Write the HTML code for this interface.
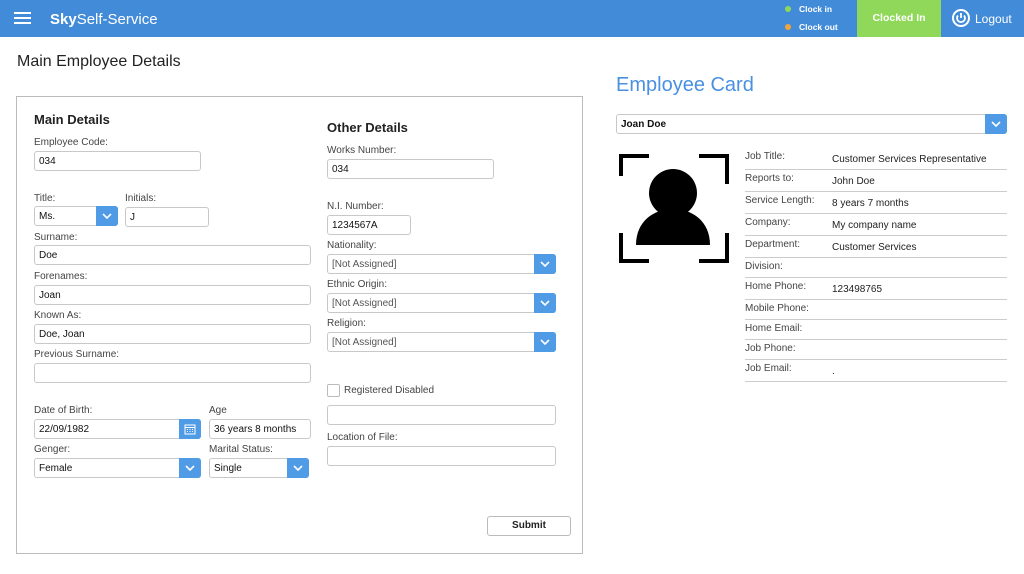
<!DOCTYPE html>
<html><head><meta charset="utf-8"><style>
*{box-sizing:border-box;margin:0;padding:0}
body{width:1024px;height:574px;position:relative;background:#fff;font-family:"Liberation Sans",sans-serif;overflow:hidden;color:#222}
.a{position:absolute}
.hdr{left:0;top:0;width:1024px;height:37px;background:#428bd9}
.lb{position:absolute;font-size:10px;color:#444;line-height:12px;white-space:nowrap}
.in{position:absolute;height:20px;border:1px solid #c8c8c8;border-radius:3px;font-size:10px;line-height:20px;padding-left:4px;color:#111;background:#fff}
.btn{position:absolute;top:-1px;right:-1px;width:22px;height:20px;background:#4f9be6;border-radius:0 3px 3px 0}
.btn svg{position:absolute;left:6px;top:7px}
.na{color:#555}
.row{position:absolute;left:745px;width:262px;border-bottom:1px solid #ccc;font-size:10px;height:22px}
.row .k{position:absolute;left:0;top:3px;color:#444}
.row .v{position:absolute;left:87px;top:6px;color:#222}
</style></head><body>
<div class="a hdr"></div>
<div class="a" style="left:14px;top:12px;width:17px;height:2px;background:#fff"></div>
<div class="a" style="left:14px;top:17px;width:17px;height:2px;background:#fff"></div>
<div class="a" style="left:14px;top:22px;width:17px;height:2px;background:#fff"></div>
<div class="a" style="left:50px;top:11px;font-size:15px;color:#fff"><b>Sky</b>Self-Service</div>
<div class="a" style="left:785px;top:6px;width:6px;height:6px;border-radius:50%;background:#8fd85a"></div>
<div class="a" style="left:799px;top:4px;font-size:8.5px;font-weight:bold;color:#fff">Clock in</div>
<div class="a" style="left:785px;top:24px;width:6px;height:6px;border-radius:50%;background:#f3a43a"></div>
<div class="a" style="left:799px;top:22px;font-size:8.5px;font-weight:bold;color:#fff">Clock out</div>
<div class="a" style="left:857px;top:0;width:84px;height:37px;background:#8fd85a;color:#fff;font-size:10.5px;font-weight:bold;text-align:center;line-height:37px">Clocked In</div>
<svg class="a" style="left:952px;top:9px" width="18" height="18" viewBox="0 0 18 18"><circle cx="9" cy="9" r="8" fill="none" stroke="#fff" stroke-width="2"/><path d="M6 6.5A4 4 0 1 0 12 6.5" fill="none" stroke="#fff" stroke-width="1.8"/><path d="M9 4v5" stroke="#fff" stroke-width="1.8"/></svg>
<div class="a" style="left:975px;top:12px;font-size:12px;color:#fff">Logout</div>

<div class="a" style="left:17px;top:53px;font-size:16px;color:#222">Main Employee Details</div>
<div class="a" style="left:16px;top:96px;width:567px;height:458px;border:1px solid #bbb"></div>

<div class="a" style="left:34px;top:112px;font-size:13px;font-weight:bold;color:#222">Main Details</div>
<div class="lb" style="left:34px;top:137px">Employee Code:</div>
<div class="in" style="left:34px;top:151px;width:167px">034</div>
<div class="lb" style="left:34px;top:193px">Title:</div>
<div class="in" style="left:34px;top:206px;width:84px">Ms.<div class="btn"><svg width="10" height="7"><path d="M1 1l4 4 4-4" fill="none" stroke="#fff" stroke-width="1.6"/></svg></div></div>
<div class="lb" style="left:125px;top:193px">Initials:</div>
<div class="in" style="left:125px;top:207px;width:84px">J</div>
<div class="lb" style="left:34px;top:232px">Surname:</div>
<div class="in" style="left:34px;top:245px;width:277px">Doe</div>
<div class="lb" style="left:34px;top:271px">Forenames:</div>
<div class="in" style="left:34px;top:285px;width:277px">Joan</div>
<div class="lb" style="left:34px;top:310px">Known As:</div>
<div class="in" style="left:34px;top:324px;width:277px">Doe, Joan</div>
<div class="lb" style="left:34px;top:349px">Previous Surname:</div>
<div class="in" style="left:34px;top:363px;width:277px"></div>
<div class="lb" style="left:34px;top:405px">Date of Birth:</div>
<div class="in" style="left:34px;top:419px;width:167px">22/09/1982<div class="btn"><svg style="left:5px;top:4px" width="12" height="12"><rect x="1" y="2" width="10" height="9" fill="none" stroke="#fff"/><path d="M1 4.5h10M3 6.5h1M5.5 6.5h1M8 6.5h1M3 8.5h1M5.5 8.5h1M8 8.5h1" stroke="#fff"/></svg></div></div>
<div class="lb" style="left:209px;top:405px">Age</div>
<div class="in" style="left:209px;top:419px;width:102px">36 years 8 months</div>
<div class="lb" style="left:34px;top:444px">Genger:</div>
<div class="in" style="left:34px;top:458px;width:167px">Female<div class="btn"><svg width="10" height="7"><path d="M1 1l4 4 4-4" fill="none" stroke="#fff" stroke-width="1.6"/></svg></div></div>
<div class="lb" style="left:209px;top:444px">Marital Status:</div>
<div class="in" style="left:209px;top:458px;width:100px">Single<div class="btn"><svg width="10" height="7"><path d="M1 1l4 4 4-4" fill="none" stroke="#fff" stroke-width="1.6"/></svg></div></div>

<div class="a" style="left:327px;top:120px;font-size:13px;font-weight:bold;color:#222">Other Details</div>
<div class="lb" style="left:327px;top:145px">Works Number:</div>
<div class="in" style="left:327px;top:159px;width:167px">034</div>
<div class="lb" style="left:327px;top:201px">N.I. Number:</div>
<div class="in" style="left:327px;top:215px;width:84px">1234567A</div>
<div class="lb" style="left:327px;top:240px">Nationality:</div>
<div class="in na" style="left:327px;top:254px;width:229px">[Not Assigned]<div class="btn"><svg width="10" height="7"><path d="M1 1l4 4 4-4" fill="none" stroke="#fff" stroke-width="1.6"/></svg></div></div>
<div class="lb" style="left:327px;top:279px">Ethnic Origin:</div>
<div class="in na" style="left:327px;top:293px;width:229px">[Not Assigned]<div class="btn"><svg width="10" height="7"><path d="M1 1l4 4 4-4" fill="none" stroke="#fff" stroke-width="1.6"/></svg></div></div>
<div class="lb" style="left:327px;top:318px">Religion:</div>
<div class="in na" style="left:327px;top:332px;width:229px">[Not Assigned]<div class="btn"><svg width="10" height="7"><path d="M1 1l4 4 4-4" fill="none" stroke="#fff" stroke-width="1.6"/></svg></div></div>
<div class="a" style="left:327px;top:384px;width:13px;height:13px;border:1px solid #bbb;border-radius:2px"></div>
<div class="lb" style="left:344px;top:385px">Registered Disabled</div>
<div class="in" style="left:327px;top:405px;width:229px"></div>
<div class="lb" style="left:327px;top:432px">Location of File:</div>
<div class="in" style="left:327px;top:446px;width:229px"></div>
<div class="a" style="left:487px;top:516px;width:84px;height:20px;border:1px solid #bbb;border-radius:3px;font-size:10px;font-weight:bold;text-align:center;line-height:18px">Submit</div>

<div class="a" style="left:616px;top:74px;font-size:20px;color:#4a90e2">Employee Card</div>
<div class="in" style="left:616px;top:114px;width:391px;font-weight:bold">Joan Doe<div class="btn"><svg width="10" height="7"><path d="M1 1l4 4 4-4" fill="none" stroke="#fff" stroke-width="1.6"/></svg></div></div>
<svg class="a" style="left:619px;top:153px" width="110" height="110" viewBox="0 0 110 110"><path d="M2 23V3h28M80 3h28v28M108 80v28H80M30 108H2V80" fill="none" stroke="#000" stroke-width="4"/><circle cx="54" cy="40" r="24" fill="#000"/><path d="M17 92C17 68 35 56 54 56C73 56 91 68 91 92Z" fill="#000"/></svg>

<div class="row" style="top:148px"><span class="k">Job Title:</span><span class="v">Customer Services Representative</span></div>
<div class="row" style="top:170px"><span class="k">Reports to:</span><span class="v">John Doe</span></div>
<div class="row" style="top:192px"><span class="k">Service Length:</span><span class="v">8 years 7 months</span></div>
<div class="row" style="top:214px"><span class="k">Company:</span><span class="v">My company name</span></div>
<div class="row" style="top:236px"><span class="k">Department:</span><span class="v">Customer Services</span></div>
<div class="row" style="top:258px;height:20px"><span class="k">Division:</span></div>
<div class="row" style="top:278px"><span class="k">Home Phone:</span><span class="v">123498765</span></div>
<div class="row" style="top:300px;height:20px"><span class="k">Mobile Phone:</span></div>
<div class="row" style="top:320px;height:20px"><span class="k">Home Email:</span></div>
<div class="row" style="top:340px;height:20px"><span class="k">Job Phone:</span></div>
<div class="row" style="top:360px;height:22px"><span class="k">Job Email:</span><span class="v">.</span></div>
</body></html>
